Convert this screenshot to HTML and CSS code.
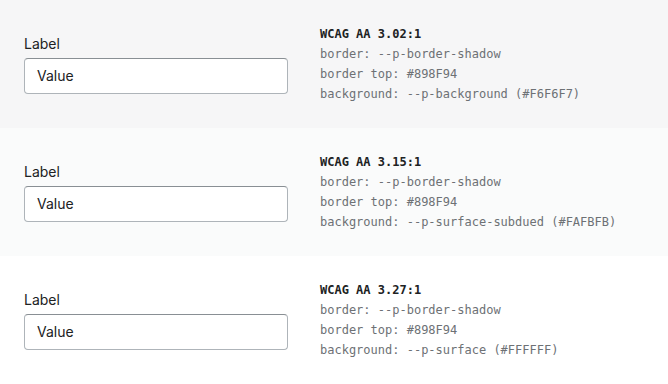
FILE: index.html
```html
<!DOCTYPE html>
<html><head><meta charset="UTF-8">
<title>TextField contrast</title>
<link rel="stylesheet" href="styles.css">
</head>
<body>
<div class="row bg1">
<div class="field"><label class="lbl">Label</label><div class="inp">Value</div></div>
<div class="info"><div class="t">WCAG AA 3.02:1</div><div>border: --p-border-shadow</div><div>border top: #898F94</div><div>background: --p-background (#F6F6F7)</div></div>
</div>
<div class="row bg2">
<div class="field"><label class="lbl">Label</label><div class="inp">Value</div></div>
<div class="info"><div class="t">WCAG AA 3.15:1</div><div>border: --p-border-shadow</div><div>border top: #898F94</div><div>background: --p-surface-subdued (#FAFBFB)</div></div>
</div>
<div class="row bg3">
<div class="field"><label class="lbl">Label</label><div class="inp">Value</div></div>
<div class="info"><div class="t">WCAG AA 3.27:1</div><div>border: --p-border-shadow</div><div>border top: #898F94</div><div>background: --p-surface (#FFFFFF)</div></div>
</div>
</body>
</html>
```
FILE: styles.css
```css
body{margin:0;font:14px Inter,"Liberation Sans",sans-serif;color:#202223;}
.row{height:128px;box-sizing:border-box;padding:0 24px;display:flex;align-items:center;gap:32px;}
.bg1{background:#f6f6f7;}
.bg2{background:#fafbfb;}
.bg3{background:#fff;}
.field{width:264px;display:flex;flex-direction:column;gap:4px;}
.lbl{line-height:20px;display:block;}
.inp{height:36px;box-sizing:border-box;padding:0 12px;line-height:34px;background:#fff;border:1px solid #aeb4b9;border-top-color:#898f94;border-radius:4px;}
.info{font:12px/20px "DejaVu Sans Mono","Liberation Mono",monospace;color:#6d7175;}
.t{font-weight:bold;color:#202223;}
```
